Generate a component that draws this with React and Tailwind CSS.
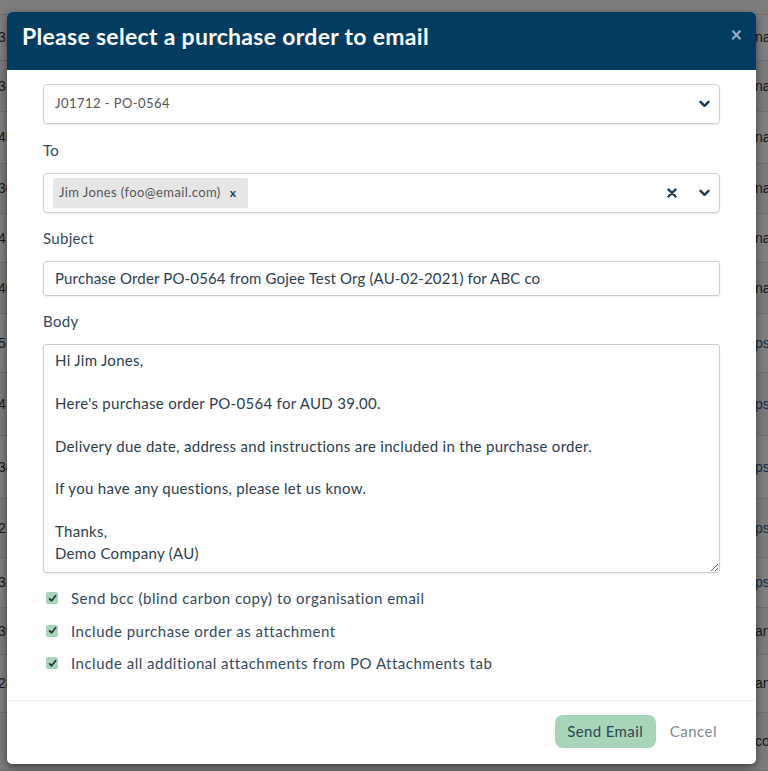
import React from "react";

const rows = [
  { h: 15, l: "", r: "", bg: "bg-[#fafafa]" },
  { h: 46, l: "3.50", r: "name", bg: "bg-white" },
  { h: 51, l: "3.25", r: "name", bg: "bg-[#f7f7f7]" },
  { h: 52, l: "45.0", r: "name", bg: "bg-white" },
  { h: 50, l: "30.0", r: "name", bg: "bg-[#f7f7f7]" },
  { h: 49, l: "4,20", r: "name", bg: "bg-white" },
  { h: 51, l: "40.0", r: "name", bg: "bg-[#f7f7f7]" },
  { h: 59, l: "5.00", r: "psum", bg: "bg-white" },
  { h: 63, l: "4.50", r: "psum", bg: "bg-[#f7f7f7]" },
  { h: 63, l: "34.0", r: "psum", bg: "bg-white" },
  { h: 59, l: "2.50", r: "psum", bg: "bg-[#f7f7f7]" },
  { h: 50, l: "32.0", r: "psum", bg: "bg-white" },
  { h: 47, l: "39.0", r: "anon", bg: "bg-[#f7f7f7]" },
  { h: 58, l: "28.0", r: "anon", bg: "bg-white" },
  { h: 58, l: "", r: "corp", bg: "bg-[#f7f7f7]" },
];

const Chevron = () => (
  <svg width="11" height="8" viewBox="0 0 11 8" className="text-[#1d3a4f]">
    <path d="M1.5 1.8 L5.5 5.8 L9.5 1.8" fill="none" stroke="currentColor" strokeWidth="2.4" strokeLinecap="round" strokeLinejoin="round" />
  </svg>
);

const Check = () => (
  <span className="flex items-center justify-center w-[12px] h-[12px] rounded-[2px] bg-[#a8d5ba]">
    <svg width="9" height="9" viewBox="0 0 9 9">
      <path d="M1.6 4.8 L3.6 6.8 L7.6 1.8" fill="none" stroke="#2b3b3a" strokeWidth="1.8" strokeLinecap="round" strokeLinejoin="round" />
    </svg>
  </span>
);

export default function App() {
  const font = { fontFamily: "Lato, 'Open Sans', sans-serif" };
  return (
    <div className="relative w-full h-[771px] overflow-hidden bg-white" style={{ fontFamily: "'Liberation Sans', Arial, sans-serif" }}>
      {/* background table */}
      <div className="flex flex-col">
        {rows.map((r, i) => (
          <div key={i} className={`flex items-center border-b border-[#ddd] text-[14px] text-[#333] ${r.bg}`} style={{ height: r.h }}>
            <div className="w-[757px] shrink-0 pl-0 -ml-[2px]">{r.l}</div>
            <div className={`${r.r === "psum" ? "text-[#2a5d8f]" : ""}`}>{r.r}</div>
          </div>
        ))}
      </div>

      {/* overlay */}
      <div className="absolute inset-0 bg-black/50" />

      {/* modal */}
      <div className="absolute left-[7px] top-[12px] w-[749px] h-[752px] bg-white rounded-[5px] overflow-hidden flex flex-col shadow-[0_3px_9px_rgba(0,0,0,0.5)]" style={font}>
        <div className="h-[58px] shrink-0 bg-[#023c60] flex items-center justify-between pl-[15px] pr-[14px]">
          <h1 className="text-white text-[23px] font-bold tracking-[0.3px] leading-none -mt-[9px]">Please select a purchase order to email</h1>
          <span className="text-[#9fb3c4] text-[20px] font-bold leading-none -mt-[14px]">×</span>
        </div>

        <div className="flex-1 px-[36px] pt-[14px] text-[#34495e]">
          {/* select */}
          <div className="h-[40px] border border-[#cfcfcf] rounded-[4px] shadow-[0_1px_2px_rgba(0,0,0,0.08)] flex items-center justify-between pl-[11px] pr-[9px]">
            <span className="text-[13px] text-[#555] tracking-[0.45px]">J01712 - PO-0564</span>
            <Chevron />
          </div>

          <div className="mt-[16px] mb-[13px] h-[20px] text-[15px] leading-[20px] tracking-[0.3px]">To</div>
          <div className="h-[40px] border border-[#cfcfcf] rounded-[4px] shadow-[0_1px_2px_rgba(0,0,0,0.08)] flex items-center justify-between pl-[9px] pr-[9px]">
            <span className="h-[30px] flex items-center gap-[9px] bg-[#e6e6e6] rounded-[2px] pl-[6px] pr-[12px] text-[13px] tracking-[0.4px] text-[#555]">
              Jim Jones (foo@email.com)
              <span className="text-[#1d3a4f] font-bold text-[12px]">x</span>
            </span>
            <span className="flex items-center gap-[22px]">
              <svg width="10" height="10" viewBox="0 0 10 10">
                <path d="M1.5 1.5 L8.5 8.5 M8.5 1.5 L1.5 8.5" stroke="#1d3a4f" strokeWidth="2.4" strokeLinecap="round" />
              </svg>
              <Chevron />
            </span>
          </div>

          <div className="mt-[15px] mb-[13px] h-[20px] text-[15px] leading-[20px] tracking-[0.3px]">Subject</div>
          <div className="h-[35px] border border-[#cfcfcf] rounded-[3px] shadow-[0_1px_2px_rgba(0,0,0,0.08)] flex items-center pl-[11px] text-[15px] tracking-[0.15px] text-[#2c3e50]">
            Purchase Order PO-0564 from Gojee Test Org (AU-02-2021) for ABC co
          </div>

          <div className="mt-[15px] mb-[13px] h-[20px] text-[15px] leading-[20px] tracking-[0.3px]">Body</div>
          <textarea
            readOnly
            className="block w-full h-[229px] border border-[#cfcfcf] rounded-[3px] shadow-[0_1px_2px_rgba(0,0,0,0.08)] pl-[11px] pt-[5px] text-[15px] leading-[21.4px] tracking-[0.3px] text-[#2c3e50] outline-none resize-y"
            style={font}
            defaultValue={"Hi Jim Jones,\n\nHere's purchase order PO-0564 for AUD 39.00.\n\nDelivery due date, address and instructions are included in the purchase order.\n\nIf you have any questions, please let us know.\n\nThanks,\nDemo Company (AU)"}
          />

          <div className="mt-[15px] flex flex-col gap-[12.5px] text-[15px] text-[#34495e]">
            {[
              "Send bcc (blind carbon copy) to organisation email",
              "Include purchase order as attachment",
              "Include all additional attachments from PO Attachments tab",
            ].map((t) => (
              <label key={t} className="h-[20px] flex items-center gap-[13px] pl-[3px] leading-[20px] tracking-[0.5px]">
                <Check />
                {t}
              </label>
            ))}
          </div>
        </div>

        <div className="h-[64px] shrink-0 border-t border-[#eee] flex items-center justify-end gap-[14px] pr-[39px] pb-[2px]">
          <button className="h-[33px] w-[101px] rounded-[8px] bg-[#a8d5ba] text-[15px] tracking-[0.4px] text-[#2b474e]">Send Email</button>
          <button className="text-[15px] tracking-[0.5px] text-[#7b8a96]">Cancel</button>
        </div>
      </div>
    </div>
  );
}
